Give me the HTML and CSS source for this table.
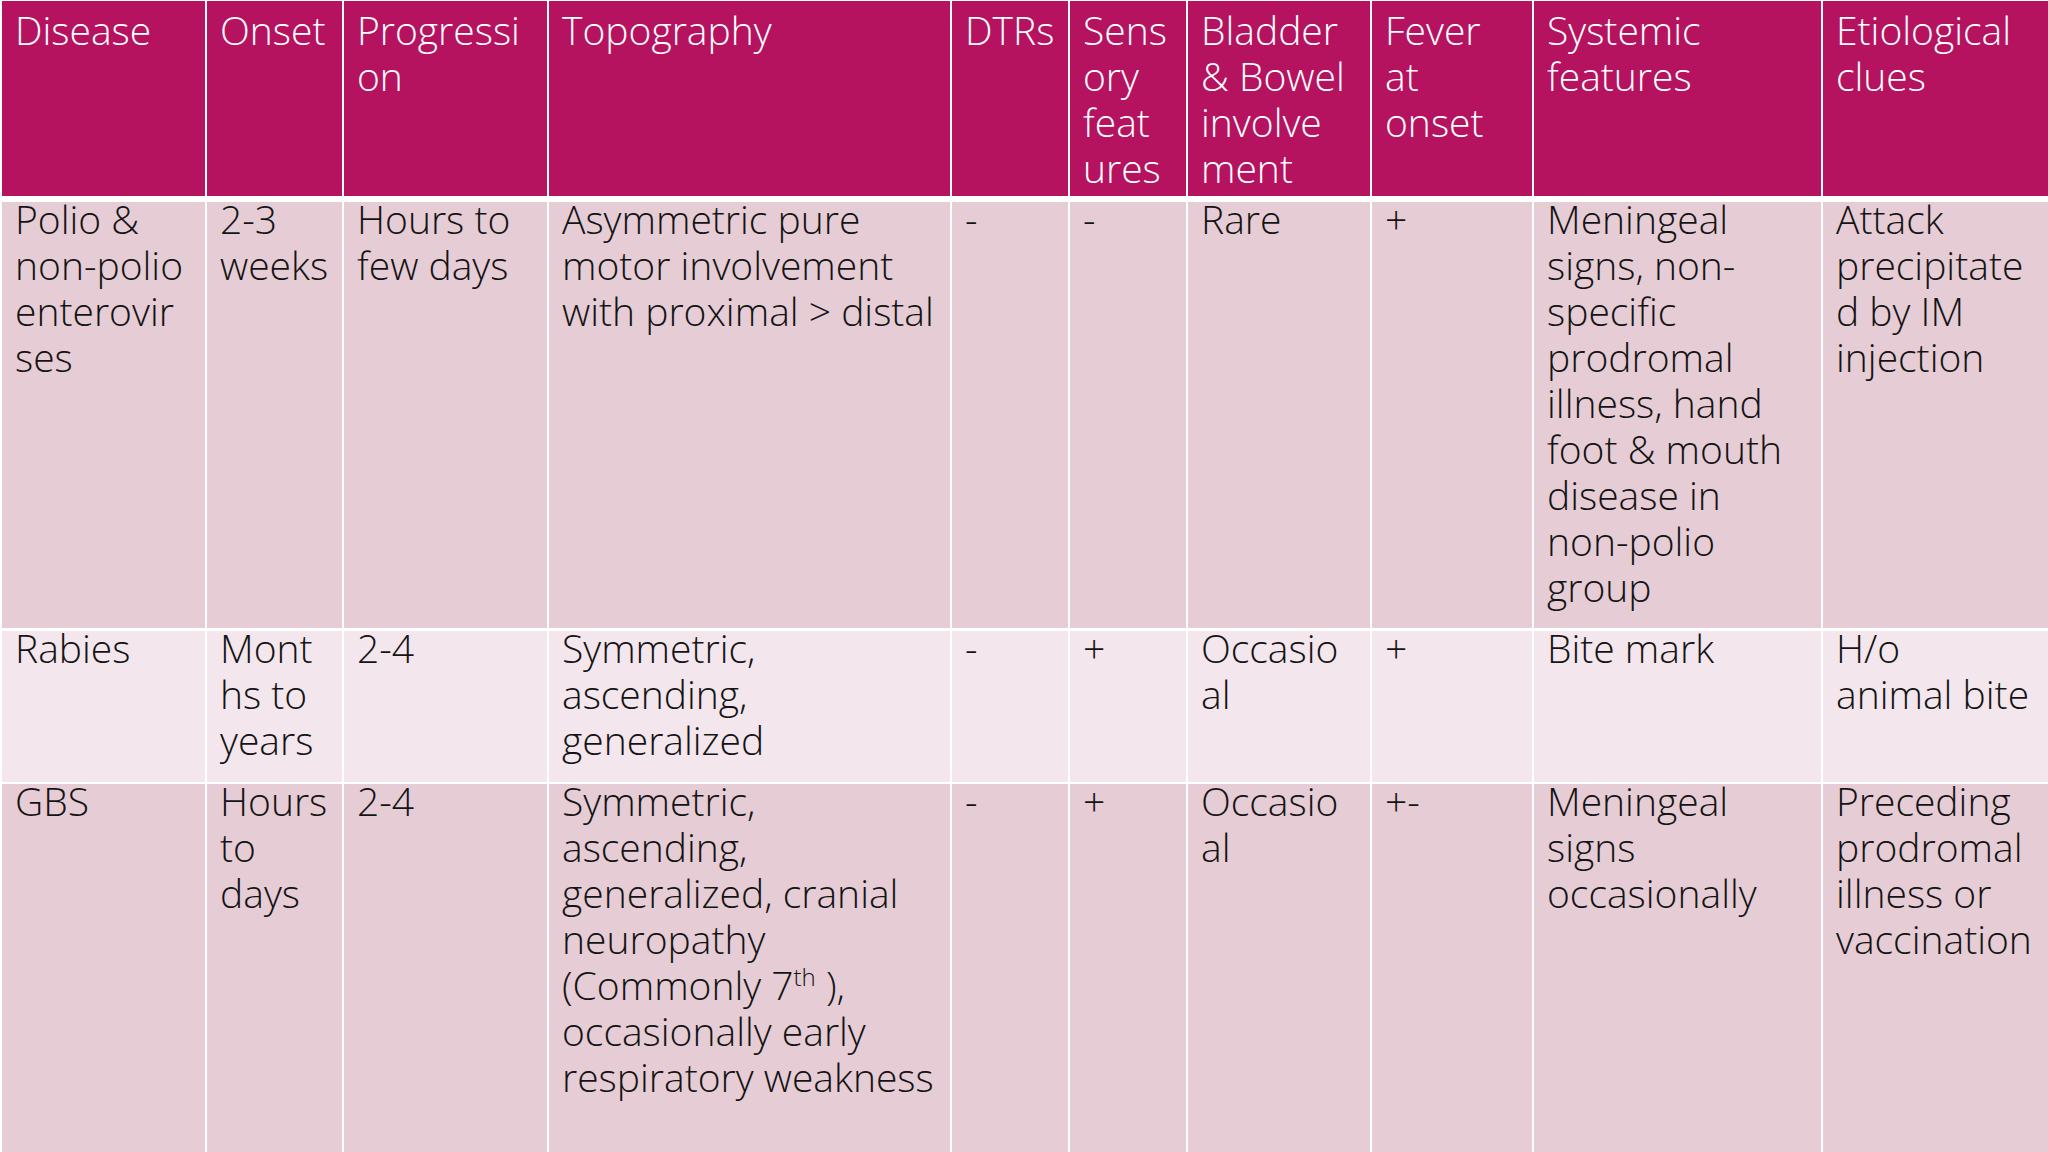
FILE: index.html
```html
<!DOCTYPE html>
<html lang="en">
<head>
<meta charset="utf-8">
<title>Acute flaccid paralysis - differential diagnosis</title>
<link rel="stylesheet" href="styles.css">
</head>
<body>
<div class="table">
  <div class="row head">
    <div class="cell"><p>Disease</p></div>
    <div class="cell"><p>Onset</p></div>
    <div class="cell"><p>Progressi<br>on</p></div>
    <div class="cell"><p>Topography</p></div>
    <div class="cell"><p>DTRs</p></div>
    <div class="cell"><p>Sens<br>ory<br>feat<br>ures</p></div>
    <div class="cell"><p>Bladder<br>&amp; Bowel<br>involve<br>ment</p></div>
    <div class="cell"><p>Fever<br>at<br>onset</p></div>
    <div class="cell"><p>Systemic<br>features</p></div>
    <div class="cell"><p>Etiological<br>clues</p></div>
  </div>
  <div class="row band1 r1">
    <div class="cell"><p>Polio &amp;<br>non-polio<br>enterovir<br>ses</p></div>
    <div class="cell"><p>2-3<br>weeks</p></div>
    <div class="cell"><p>Hours to<br>few days</p></div>
    <div class="cell"><p>Asymmetric pure<br>motor involvement<br>with proximal &gt; distal</p></div>
    <div class="cell"><p>-</p></div>
    <div class="cell"><p>-</p></div>
    <div class="cell"><p>Rare</p></div>
    <div class="cell"><p>+</p></div>
    <div class="cell"><p>Meningeal<br>signs, non-<br>specific<br>prodromal<br>illness, hand<br>foot &amp; mouth<br>disease in<br>non-polio<br>group</p></div>
    <div class="cell"><p>Attack<br>precipitate<br>d by IM<br>injection</p></div>
  </div>
  <div class="row band2 r2">
    <div class="cell"><p>Rabies</p></div>
    <div class="cell"><p>Mont<br>hs to<br>years</p></div>
    <div class="cell"><p>2-4</p></div>
    <div class="cell"><p>Symmetric,<br>ascending,<br>generalized</p></div>
    <div class="cell"><p>-</p></div>
    <div class="cell"><p>+</p></div>
    <div class="cell"><p>Occasio<br>al</p></div>
    <div class="cell"><p>+</p></div>
    <div class="cell"><p>Bite mark</p></div>
    <div class="cell"><p>H/o<br>animal bite</p></div>
  </div>
  <div class="row band1 r3">
    <div class="cell"><p>GBS</p></div>
    <div class="cell"><p>Hours<br>to<br>days</p></div>
    <div class="cell"><p>2-4</p></div>
    <div class="cell"><p>Symmetric,<br>ascending,<br>generalized, cranial<br>neuropathy<br>(Commonly 7<sup>th</sup> ),<br>occasionally early<br>respiratory weakness</p></div>
    <div class="cell"><p>-</p></div>
    <div class="cell"><p>+</p></div>
    <div class="cell"><p>Occasio<br>al</p></div>
    <div class="cell"><p>+-</p></div>
    <div class="cell"><p>Meningeal<br>signs<br>occasionally</p></div>
    <div class="cell"><p>Preceding<br>prodromal<br>illness or<br>vaccination</p></div>
  </div>
</div>
</body>
</html>
```

FILE: styles.css
```css
html, body {
  margin: 0;
  padding: 0;
  background: #ffffff;
}

body {
  width: 2048px;
  height: 1152px;
  overflow: hidden;
  font-family: "Open Sans", "Liberation Sans", sans-serif;
  font-weight: 300;
  font-size: 39px;
  line-height: 46px;
  color: #141414;
}

.table {
  display: flex;
  flex-direction: column;
  padding: 1px 0 0 2px;
}

.row {
  display: grid;
  grid-template-columns: 203px 135px 203px 401px 116px 116px 182px 160px 287px 225px;
  column-gap: 2px;
}

.cell {
  overflow: visible;
  padding: 0 4px 0 13px;
  white-space: nowrap;
}

.cell p {
  margin: 0;
}

.head {
  height: 195px;
  margin-bottom: 6px;
}

.head .cell {
  background: #b5135f;
  color: #ffffff;
  padding-top: 6px;
}

.band1 .cell {
  background: #e6ccd5;
}

.band2 .cell {
  background: #f3e6ec;
}

.r1 .cell p,
.r2 .cell p,
.r3 .cell p {
  margin-top: -6px;
}

.r1 {
  height: 426px;
  margin-bottom: 3px;
}

.r2 {
  height: 151px;
  margin-bottom: 2px;
}

.r3 {
  height: 368px;
}

sup {
  font-size: 24px;
  line-height: 0;
  vertical-align: 14px;
}
```
